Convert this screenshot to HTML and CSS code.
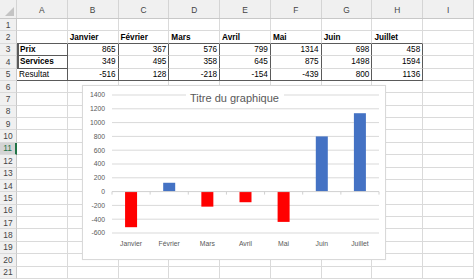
FILE: index.html
```html
<!DOCTYPE html>
<html lang="fr">
<head>
<meta charset="utf-8">
<title>Classeur</title>
<link rel="stylesheet" href="styles.css">
</head>
<body>
<div class="sheet">
  <div class="row head">
    <div class="corner"><span class="tri"></span></div>
    <div class="ch">A</div><div class="ch">B</div><div class="ch">C</div><div class="ch">D</div><div class="ch">E</div><div class="ch">F</div><div class="ch">G</div><div class="ch">H</div><div class="ch">I</div>
  </div>
  <div class="row"><div class="rh">1</div><div class="c"></div><div class="c"></div><div class="c"></div><div class="c"></div><div class="c"></div><div class="c"></div><div class="c"></div><div class="c"></div><div class="c"></div></div>
  <div class="row"><div class="rh">2</div><div class="c bb"></div><div class="c bb b">Janvier</div><div class="c bb b">Février</div><div class="c bb b">Mars</div><div class="c bb b">Avril</div><div class="c bb b">Mai</div><div class="c bb b">Juin</div><div class="c bb b">Juillet</div><div class="c"></div></div>
  <div class="row"><div class="rh">3</div><div class="c b abox bb br">Prix</div><div class="c n br">865</div><div class="c n br">367</div><div class="c n br">576</div><div class="c n br">799</div><div class="c n br">1314</div><div class="c n br">698</div><div class="c n br">458</div><div class="c"></div></div>
  <div class="row"><div class="rh">4</div><div class="c b abox bb br">Services</div><div class="c n br">349</div><div class="c n br">495</div><div class="c n br">358</div><div class="c n br">645</div><div class="c n br">875</div><div class="c n br">1498</div><div class="c n br">1594</div><div class="c"></div></div>
  <div class="row"><div class="rh">5</div><div class="c bb br">Resultat</div><div class="c n bb br">-516</div><div class="c n bb br">128</div><div class="c n bb br">-218</div><div class="c n bb br">-154</div><div class="c n bb br">-439</div><div class="c n bb br">800</div><div class="c n bb br">1136</div><div class="c"></div></div>
  <div class="row"><div class="rh">6</div><div class="c"></div><div class="c"></div><div class="c"></div><div class="c"></div><div class="c"></div><div class="c"></div><div class="c"></div><div class="c"></div><div class="c"></div></div>
  <div class="row"><div class="rh">7</div><div class="c"></div><div class="c"></div><div class="c"></div><div class="c"></div><div class="c"></div><div class="c"></div><div class="c"></div><div class="c"></div><div class="c"></div></div>
  <div class="row"><div class="rh">8</div><div class="c"></div><div class="c"></div><div class="c"></div><div class="c"></div><div class="c"></div><div class="c"></div><div class="c"></div><div class="c"></div><div class="c"></div></div>
  <div class="row"><div class="rh">9</div><div class="c"></div><div class="c"></div><div class="c"></div><div class="c"></div><div class="c"></div><div class="c"></div><div class="c"></div><div class="c"></div><div class="c"></div></div>
  <div class="row"><div class="rh">10</div><div class="c"></div><div class="c"></div><div class="c"></div><div class="c"></div><div class="c"></div><div class="c"></div><div class="c"></div><div class="c"></div><div class="c"></div></div>
  <div class="row"><div class="rh sel">11</div><div class="c"></div><div class="c"></div><div class="c"></div><div class="c"></div><div class="c"></div><div class="c"></div><div class="c"></div><div class="c"></div><div class="c"></div></div>
  <div class="row"><div class="rh">12</div><div class="c"></div><div class="c"></div><div class="c"></div><div class="c"></div><div class="c"></div><div class="c"></div><div class="c"></div><div class="c"></div><div class="c"></div></div>
  <div class="row"><div class="rh">13</div><div class="c"></div><div class="c"></div><div class="c"></div><div class="c"></div><div class="c"></div><div class="c"></div><div class="c"></div><div class="c"></div><div class="c"></div></div>
  <div class="row"><div class="rh">14</div><div class="c"></div><div class="c"></div><div class="c"></div><div class="c"></div><div class="c"></div><div class="c"></div><div class="c"></div><div class="c"></div><div class="c"></div></div>
  <div class="row"><div class="rh">15</div><div class="c"></div><div class="c"></div><div class="c"></div><div class="c"></div><div class="c"></div><div class="c"></div><div class="c"></div><div class="c"></div><div class="c"></div></div>
  <div class="row"><div class="rh">16</div><div class="c"></div><div class="c"></div><div class="c"></div><div class="c"></div><div class="c"></div><div class="c"></div><div class="c"></div><div class="c"></div><div class="c"></div></div>
  <div class="row"><div class="rh">17</div><div class="c"></div><div class="c"></div><div class="c"></div><div class="c"></div><div class="c"></div><div class="c"></div><div class="c"></div><div class="c"></div><div class="c"></div></div>
  <div class="row"><div class="rh">18</div><div class="c"></div><div class="c"></div><div class="c"></div><div class="c"></div><div class="c"></div><div class="c"></div><div class="c"></div><div class="c"></div><div class="c"></div></div>
  <div class="row"><div class="rh">19</div><div class="c"></div><div class="c"></div><div class="c"></div><div class="c"></div><div class="c"></div><div class="c"></div><div class="c"></div><div class="c"></div><div class="c"></div></div>
  <div class="row"><div class="rh">20</div><div class="c"></div><div class="c"></div><div class="c"></div><div class="c"></div><div class="c"></div><div class="c"></div><div class="c"></div><div class="c"></div><div class="c"></div></div>
  <div class="row"><div class="rh">21</div><div class="c"></div><div class="c"></div><div class="c"></div><div class="c"></div><div class="c"></div><div class="c"></div><div class="c"></div><div class="c"></div><div class="c"></div></div>

  <div class="chart">
    <svg class="chart-svg" width="304" height="175" viewBox="0 0 304 175" xmlns="http://www.w3.org/2000/svg">
      <g class="grid" stroke="#d9d9d9" stroke-width="1">
        <line x1="30" x2="297" y1="10" y2="10"/>
        <line x1="30" x2="297" y1="23.8" y2="23.8"/>
        <line x1="30" x2="297" y1="37.6" y2="37.6"/>
        <line x1="30" x2="297" y1="51.4" y2="51.4"/>
        <line x1="30" x2="297" y1="65.2" y2="65.2"/>
        <line x1="30" x2="297" y1="79" y2="79"/>
        <line x1="30" x2="297" y1="92.8" y2="92.8"/>
        <line x1="30" x2="297" y1="120.4" y2="120.4"/>
        <line x1="30" x2="297" y1="134.2" y2="134.2"/>
        <line x1="30" x2="297" y1="148" y2="148"/>
      </g>
      <rect x="104" y="2" width="98" height="18" fill="#ffffff"/>
      <text class="title" x="152.5" y="17" text-anchor="middle">Titre du graphique</text>
      <g class="ylab" text-anchor="end">
        <text x="23" y="12.4">1400</text>
        <text x="23" y="26.2">1200</text>
        <text x="23" y="40">1000</text>
        <text x="23" y="53.8">800</text>
        <text x="23" y="67.6">600</text>
        <text x="23" y="81.4">400</text>
        <text x="23" y="95.2">200</text>
        <text x="23" y="109">0</text>
        <text x="23" y="122.8">-200</text>
        <text x="23" y="136.6">-400</text>
        <text x="23" y="150.4">-600</text>
      </g>
      <g class="bars">
        <rect x="43.07" y="106.6" width="12" height="35.6" fill="#ff0000"/>
        <rect x="81.2" y="97.77" width="12" height="8.83" fill="#4472c4"/>
        <rect x="119.35" y="106.6" width="12" height="15.04" fill="#ff0000"/>
        <rect x="157.5" y="106.6" width="12" height="10.63" fill="#ff0000"/>
        <rect x="195.6" y="106.6" width="12" height="30.29" fill="#ff0000"/>
        <rect x="233.8" y="51.4" width="12" height="55.2" fill="#4472c4"/>
        <rect x="271.9" y="28.22" width="12" height="78.38" fill="#4472c4"/>
      </g>
      <g class="axis" stroke="#d0d0d0" stroke-width="1">
        <line x1="30" x2="297" y1="106.6" y2="106.6"/>
        <line x1="30" x2="30" y1="106.6" y2="109.6"/>
        <line x1="68.14" x2="68.14" y1="106.6" y2="109.6"/>
        <line x1="106.29" x2="106.29" y1="106.6" y2="109.6"/>
        <line x1="144.43" x2="144.43" y1="106.6" y2="109.6"/>
        <line x1="182.57" x2="182.57" y1="106.6" y2="109.6"/>
        <line x1="220.71" x2="220.71" y1="106.6" y2="109.6"/>
        <line x1="258.86" x2="258.86" y1="106.6" y2="109.6"/>
        <line x1="297" x2="297" y1="106.6" y2="109.6"/>
      </g>
      <g class="xlab" text-anchor="middle">
        <text x="49.07" y="160.5">Janvier</text>
        <text x="87.2" y="160.5">Février</text>
        <text x="125.35" y="160.5">Mars</text>
        <text x="163.5" y="160.5">Avril</text>
        <text x="201.6" y="160.5">Mai</text>
        <text x="239.8" y="160.5">Juin</text>
        <text x="277.9" y="160.5">Juillet</text>
      </g>
    </svg>
  </div>
</div>
</body>
</html>
```

FILE: styles.css
```css
* { box-sizing: border-box; }

html, body {
  margin: 0;
  padding: 0;
  background: #ffffff;
  overflow: hidden;
}

.sheet {
  position: relative;
  width: 474px;
  height: 279px;
  display: flex;
  flex-direction: column;
  font-family: "Liberation Sans", Arial, sans-serif;
  font-size: 8.2px;
  color: #000;
}

.row {
  flex: 1 1 0;
  min-height: 0;
  display: grid;
  grid-template-columns: 17px repeat(9, 1fr);
}

.row.head {
  flex: 0 0 19px;
  background: #f0f0f0;
  border-bottom: 1px solid #c8c8c8;
}

.corner {
  position: relative;
  border-right: 1px solid #d4d4d4;
}

.tri {
  position: absolute;
  right: 2px;
  bottom: 2px;
  width: 0;
  height: 0;
  border-left: 9px solid transparent;
  border-bottom: 9px solid #c4c4c4;
}

.ch {
  display: flex;
  align-items: center;
  justify-content: center;
  color: #444;
  font-size: 8.4px;
  border-right: 1px solid #d4d4d4;
  padding-top: 1px;
}

.rh {
  background: #f0f0f0;
  color: #444;
  font-size: 8.4px;
  display: flex;
  align-items: center;
  justify-content: center;
  border-right: 1px solid #c8c8c8;
  border-bottom: 1px solid #dadada;
}

.rh.sel {
  background: #d4d4d4;
  color: #217346;
  border-right: 2px solid #217346;
}

.c {
  display: flex;
  align-items: flex-end;
  padding: 0 2px 1px;
  line-height: 1;
  white-space: nowrap;
  overflow: visible;
  border-right: 1px solid #dadada;
  border-bottom: 1px solid #dadada;
}

.b { font-weight: bold; }
.n { justify-content: flex-end; }
.bb { border-bottom-color: #5a5a5a; }
.br { border-right-color: #5a5a5a; }
.abox { box-shadow: inset 2px 0 0 #5a5a5a; padding-left: 3px; }

.chart {
  position: absolute;
  left: 82px;
  top: 85px;
  width: 304px;
  height: 175px;
  background: #ffffff;
  border: 1px solid #d9d9d9;
  box-shadow: 0 0 1px rgba(0,0,0,0.08);
}

.chart-svg {
  display: block;
  position: absolute;
  left: -1px;
  top: -1px;
  font-family: "Liberation Sans", Arial, sans-serif;
}

.title {
  font-size: 11px;
  fill: #595959;
}

.ylab text, .xlab text {
  font-size: 6.8px;
  fill: #595959;
}
```
